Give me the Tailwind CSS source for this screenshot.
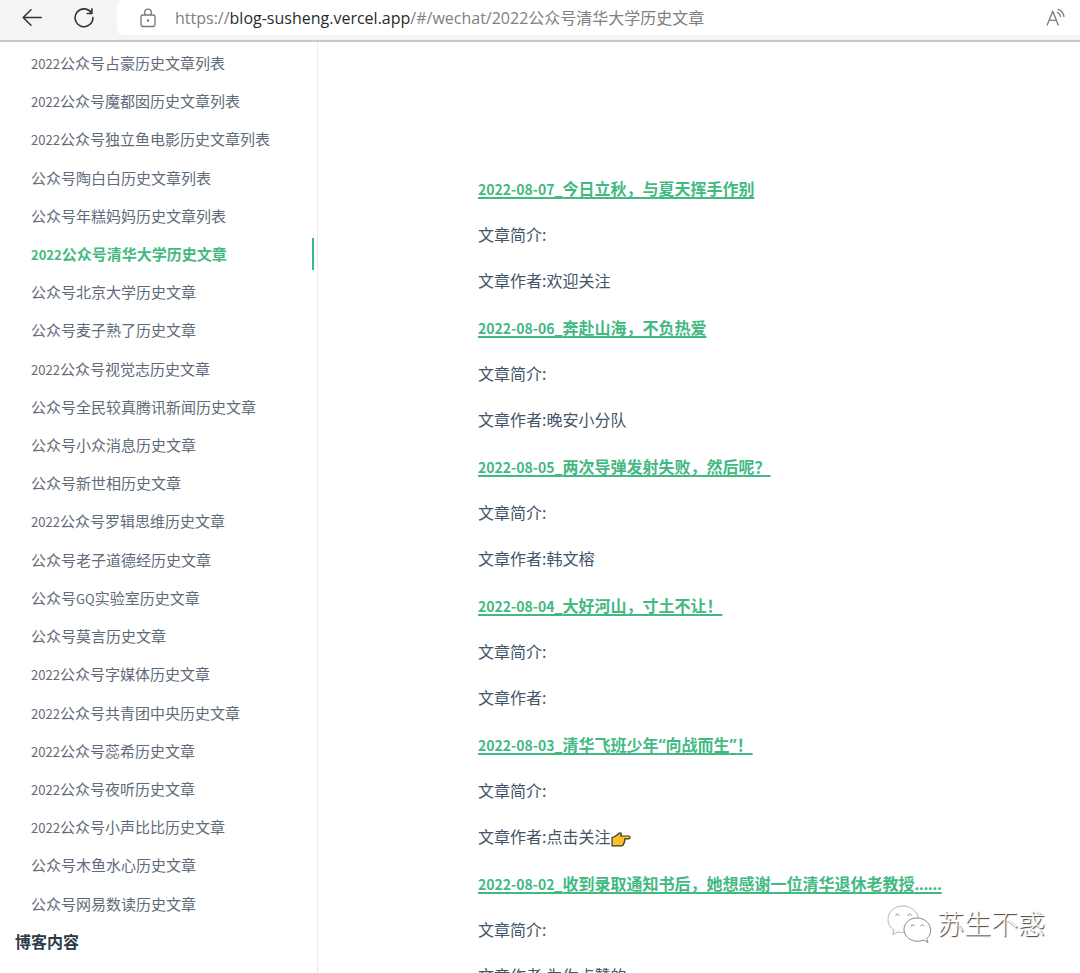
<!DOCTYPE html>
<html lang="zh-CN">
<head>
<meta charset="utf-8">
<meta name="viewport" content="width=device-width, initial-scale=1">
<title>2022公众号清华大学历史文章</title>
<script src="https://cdn.jsdelivr.net/npm/@tailwindcss/browser@4"></script>
</head>
<body class="flex h-screen flex-col overflow-hidden bg-white font-['Noto_Sans_CJK_SC',sans-serif] text-[#435569]">
<header class="flex shrink-0 items-start border-b-2 border-[#c9c9c9] bg-[#f4f4f4] pb-[5px]">
  <div class="flex h-[35px] w-[117px] shrink-0 items-center gap-8 pl-[22px] text-[#333]">
    <button type="button" aria-label="后退"><svg class="size-5" viewBox="0 0 20 20" fill="none" stroke="currentColor" stroke-width="1.5" stroke-linecap="round" stroke-linejoin="round"><path d="M19.2 9.5H1.2M9 1.7L1.2 9.5L9 17.3"/></svg></button>
    <button type="button" aria-label="刷新"><svg class="size-5" viewBox="0 0 20 20" fill="none" stroke="currentColor" stroke-width="1.6" stroke-linecap="round" stroke-linejoin="round"><path d="M17.7 5.3A8.9 8.9 0 1 0 18.9 9.6M17.9 0.9V5.5H13.3"/></svg></button>
  </div>
  <div class="flex h-[35px] flex-1 items-center rounded-l-md bg-white pr-3.5 pl-[22px]">
    <button type="button" aria-label="站点信息" class="mr-[18px] text-[#767676]"><svg class="h-5 w-[18px]" viewBox="0 0 18 20" fill="none" stroke="currentColor" stroke-width="1.3"><rect x="2" y="7" width="14" height="11.5" rx="1.8"/><path d="M5.7 7V4.5a3.3 3.3 0 0 1 6.6 0V7"/><circle cx="9" cy="12.5" r="1.2" fill="currentColor" stroke="none"/></svg></button>
    <div role="textbox" aria-label="地址栏" contenteditable="true" spellcheck="false" class="flex-1 font-['Open_Sans','Noto_Sans_CJK_SC',sans-serif] text-base leading-6 whitespace-nowrap text-[#808080]">https://<span class="text-[#2a2a2a]">blog-susheng.vercel.app</span>/#/wechat/2022公众号清华大学历史文章</div>
    <button type="button" aria-label="大声朗读" class="text-[#808080]"><svg class="size-5" viewBox="0 0 20 20" fill="none" stroke="currentColor" stroke-width="1.4" stroke-linecap="round" stroke-linejoin="round"><path d="M1.2 17L6.8 3.2L12.2 17M3.2 12.4H10.4"/><path d="M11.4 4.4Q14 5.4 14.4 8.4M12.2 1.3Q17 3 17.9 8.4"/></svg></button>
  </div>
</header>
<div class="flex min-h-0 flex-1">
  <aside class="flex w-[318px] shrink-0 flex-col border-r border-[#ebebeb] pt-0.5 text-[15px] text-[#5f6b79]">
    <ul id="articles" class="grid flex-1 auto-rows-fr"></ul>
    <h2 class="h-[50px] pt-1.5 pl-[15px] text-base leading-6 font-bold text-[#2c3a47]">博客内容</h2>
  </aside>
  <main id="posts" class="min-w-0 flex-1 overflow-hidden pt-[123px] pl-40 text-base"></main>
</div>
<div class="pointer-events-none absolute right-[35px] bottom-[30px] flex items-center gap-1.5">
  <svg class="h-10 w-11" viewBox="0 0 44 40" fill="#fff" stroke="#8a8a8a" stroke-width="1" stroke-linejoin="round"><path d="M16 3C7 3 1 9 1 16.500C1 21 3.300 24.500 7 27L5.500 31.500L11 28.800C14 29.800 17 30 20 29C31 26 34 18 30 11C27 6 22 3 16 3Z" stroke="#b5b5b5"/><path d="M30 15C22 15 17 20.500 17 26.500C17 33 23 38.500 31 38.200C33 38.200 35 37.800 37 37L41 39.500L39.800 35.500C42.500 33.200 44 30 43.500 26C42.700 19.500 37 15 30 15Z"/><path d="M8.500 12.500Q10.500 9.500 12.500 12.500M20.500 12.500Q22.500 9.500 24.500 12.500M24 23Q26 20.500 27.500 23M33.500 23Q35.500 20.500 37 23" fill="none"/></svg>
  <span class="text-[27px] leading-10 font-light text-white [text-shadow:1px_1px_1px_#333]">苏生不惑</span>
</div>
<script>
const articles = ["2022公众号占豪历史文章列表","2022公众号魔都囡历史文章列表","2022公众号独立鱼电影历史文章列表","公众号陶白白历史文章列表","公众号年糕妈妈历史文章列表","2022公众号清华大学历史文章","公众号北京大学历史文章","公众号麦子熟了历史文章","2022公众号视觉志历史文章","公众号全民较真腾讯新闻历史文章","公众号小众消息历史文章","公众号新世相历史文章","2022公众号罗辑思维历史文章","公众号老子道德经历史文章","公众号GQ实验室历史文章","公众号莫言历史文章","2022公众号字媒体历史文章","2022公众号共青团中央历史文章","2022公众号蕊希历史文章","2022公众号夜听历史文章","2022公众号小声比比历史文章","公众号木鱼水心历史文章","公众号网易数读历史文章"];
const latin = s => s.replace(/2022|GQ/g, m => `<span class="text-[13px]">${m}</span>`);
document.getElementById("articles").innerHTML = articles.map((t, i) => i === 5
  ? `<li class="mr-[3px] flex items-center justify-between pl-[31px] font-bold text-[#42b983] after:h-8 after:w-0.5 after:bg-[#42b983] after:content-['']"><a href="#" aria-current="page">${latin(t)}</a></li>`
  : `<li class="flex items-center pl-[31px]"><a href="#">${latin(t)}</a></li>`).join("");
const hand = `<svg role="img" aria-label="👉" class="ml-px inline-block h-[15px] w-5 align-[-4px]" viewBox="0 0 20 15" fill="#fcc02e" stroke="#3c3526" stroke-width="1.2" stroke-linejoin="round"><path d="M1 5.500L4 4.500L8.500 1C9.800 0.500 10.800 1.300 10.200 2.700L9.500 4H17.500C19.600 4 19.600 6.800 17.500 6.900H13.500C14.500 8 14.100 9.100 13.100 9.500C13.800 10.700 13.100 11.700 12.300 11.900C12.500 13 11.800 13.900 10.500 13.900H1Z"/></svg>`;
const posts = [["07","今日立秋，与夏天挥手作别","欢迎关注"],["06","奔赴山海，不负热爱","晚安小分队"],["05","两次导弹发射失败，然后呢？","韩文榕"],["04","大好河山，寸土不让！",""],["03","清华飞班少年“向战而生”！","点击关注" + hand],["02","收到录取通知书后，她想感谢一位清华退休老教授……","为你点赞的"]];
const narrow = s => s.replace(/[“”]|……/g, m => `<span class="font-['Open_Sans']">${m}</span>`);
document.getElementById("posts").innerHTML = posts.map(([d, t, a]) => `<article class="whitespace-nowrap">
<h3 class="h-[46px] leading-[46px] font-bold text-[#42b983]"><a href="#" class="underline decoration-2 underline-offset-2"><span class="text-[14px]">2022-08-${d}_</span>${narrow(t)}</a></h3>
<p class="h-[46px] leading-[46px]">文章简介:</p>
<p class="h-[47px] leading-[46px]">文章作者:${a}</p></article>`).join("");
</script>
</body>
</html>
